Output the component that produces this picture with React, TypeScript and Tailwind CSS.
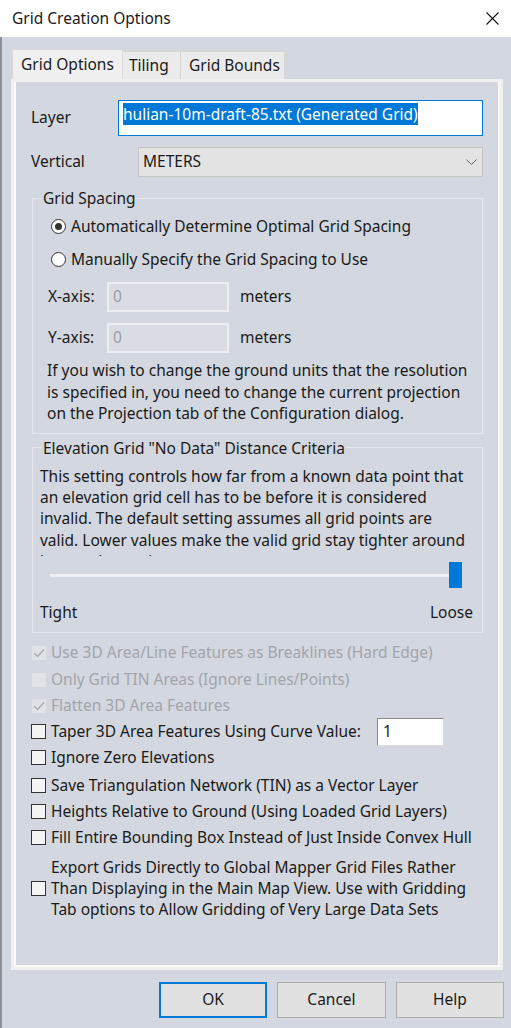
import React from "react";

function Radio({ checked }: { checked?: boolean }) {
  return (
    <span className="w-[15px] h-[15px] rounded-full border border-[#333] bg-white flex items-center justify-center shrink-0">
      {checked && <span className="w-[7px] h-[7px] rounded-full bg-[#333]" />}
    </span>
  );
}

function CheckBox({ checked, disabled }: { checked?: boolean; disabled?: boolean }) {
  if (disabled) {
    return (
      <span className="w-[14px] h-[14px] ml-[1px] bg-[#dfe2e7] flex items-center justify-center shrink-0">
        {checked && (
          <svg width="12" height="10" viewBox="0 0 12 10">
            <polyline points="1,5 4.5,8.5 11,1.5" fill="none" stroke="#a9abb0" strokeWidth="1.4" />
          </svg>
        )}
      </span>
    );
  }
  return <span className="w-[15px] h-[15px] border border-[#333] bg-[#f4f4f4] shrink-0" />;
}

function CheckRow({
  label,
  checked,
  disabled,
  className = "",
  children,
}: {
  label: string;
  checked?: boolean;
  disabled?: boolean;
  className?: string;
  children?: React.ReactNode;
}) {
  return (
    <div className={`h-[26px] flex items-center gap-[5px] ${className}`}>
      <CheckBox checked={checked} disabled={disabled} />
      <span className={`whitespace-nowrap ${disabled ? "text-[#a2a5ab]" : ""}`}>{label}</span>
      {children}
    </div>
  );
}

function AxisRow({ label, className = "" }: { label: string; className?: string }) {
  return (
    <div className={`h-[30px] flex items-center pl-[15px] ${className}`}>
      <span className="w-[59px]">{label}</span>
      <div className="w-[122px] h-[30px] border-2 border-[#eceef1] bg-[#d9dce2] flex items-center pl-[4px] text-[#9a9da3]">
        0
      </div>
      <span className="ml-[11px]">meters</span>
    </div>
  );
}

export default function App() {
  const spacingNote = [
    "If you wish to change the ground units that the resolution",
    "is specified in, you need to change the current projection",
    "on the Projection tab of the Configuration dialog.",
  ];
  const elevationNote = [
    "This setting controls how far from a known data point that",
    "an elevation grid cell has to be before it is considered",
    "invalid. The default setting assumes all grid points are",
    "valid. Lower values make the valid grid stay tighter around",
    "known data points.",
  ];

  return (
    <div className="w-[511px] h-[1028px] bg-[#d3d7df] font-['Noto_Sans',sans-serif] text-[15.5px] text-[#1a1a1a] flex flex-col overflow-hidden">
      {/* Title bar */}
      <div className="h-[37px] bg-white flex items-center justify-between pl-[12px] pr-[12px] shrink-0">
        <span>Grid Creation Options</span>
        <svg width="13" height="13" viewBox="0 0 13 13">
          <line x1="0.5" y1="0.5" x2="12.5" y2="12.5" stroke="#111" strokeWidth="1.1" />
          <line x1="12.5" y1="0.5" x2="0.5" y2="12.5" stroke="#111" strokeWidth="1.1" />
        </svg>
      </div>

      <div className="flex-1 flex flex-col border-l-2 border-[#8c8f94]">
        {/* Tabs */}
        <div className="ml-[10px] mt-[12px] h-[30px] flex items-end">
          <div className="w-[111px] h-[30px] bg-[#f0f0f0] border border-b-0 border-[#dadada] flex items-center pl-[8px]">
            Grid Options
          </div>
          <div className="w-[58px] h-[28px] bg-[#ebebeb] border border-b-0 border-l-0 border-[#d6d6d6] flex items-center pl-[6px]">
            Tiling
          </div>
          <div className="w-[104px] h-[28px] bg-[#ebebeb] border border-b-0 border-l-0 border-[#d6d6d6] flex items-center pl-[8px]">
            Grid Bounds
          </div>
        </div>

        {/* Tab panel */}
        <div className="ml-[9px] w-[492px] h-[891px] bg-[#f0f0f0] px-[3px] pt-[3px] pb-[3px]">
          <div className="h-full bg-[#d3d7df] border-2 border-t-0 border-[#fafafa] pl-[15px] pr-[15px] flex flex-col">
            {/* Layer */}
            <div className="mt-[18px] h-[36px] flex">
              <span className="w-[87px] flex items-center">Layer</span>
              <div className="flex-1 bg-white border border-[#0078d7] pt-[2px] pl-[4px]">
                <span className="bg-[#0078d7] text-white leading-[22px] inline-block whitespace-nowrap">
                  hulian-10m-draft-85.txt (Generated Grid)
                </span>
              </div>
            </div>

            {/* Vertical */}
            <div className="mt-[11px] h-[30px] flex items-center">
              <span className="w-[107px]">Vertical</span>
              <div className="flex-1 h-[30px] bg-[#e3e3e3] border border-[#c4c4c4] flex items-center justify-between pl-[4px] pr-[5px]">
                <span>METERS</span>
                <svg width="11" height="7" viewBox="0 0 11 7">
                  <polyline points="0.5,0.5 5.5,5.5 10.5,0.5" fill="none" stroke="#666" strokeWidth="1" />
                </svg>
              </div>
            </div>

            {/* Grid Spacing */}
            <fieldset className="mt-[11px] ml-[1px] border border-[#e4e6eb] pb-[8px]">
              <legend className="ml-[9px] leading-[20px] px-[1px]">Grid Spacing</legend>
              <div className="mt-[2px] pl-[18px]">
                <div className="h-[33px] flex items-center gap-[5px]">
                  <Radio checked />
                  <span>Automatically Determine Optimal Grid Spacing</span>
                </div>
                <div className="h-[33px] flex items-center gap-[5px]">
                  <Radio />
                  <span>Manually Specify the Grid Spacing to Use</span>
                </div>
              </div>
              <AxisRow label="X-axis:" className="mt-[6px]" />
              <AxisRow label="Y-axis:" className="mt-[11px]" />
              <div className="mt-[7px] pl-[14px] leading-[21.5px]">
                {spacingNote.map((line) => (
                  <div key={line} className="whitespace-nowrap">
                    {line}
                  </div>
                ))}
              </div>
            </fieldset>

            {/* Elevation criteria */}
            <fieldset className="mt-[4px] ml-[1px] border border-[#e4e6eb] pb-[9px]">
              <legend className="ml-[9px] leading-[20px] px-[1px]">Elevation Grid "No Data" Distance Criteria</legend>
              <div className="mt-[8px] h-[90px] overflow-hidden pl-[7px] leading-[21.4px]">
                {elevationNote.map((line) => (
                  <div key={line} className="whitespace-nowrap">
                    {line}
                  </div>
                ))}
              </div>
              <div className="mt-[6px] ml-[17px] w-[412px] h-[26px] relative">
                <div className="absolute left-0 right-0 top-[12px] h-[3px] bg-[#eceef1]" />
                <div className="absolute right-0 top-0 w-[13px] h-[26px] bg-[#0078d7]" />
              </div>
              <div className="mt-[15px] h-[20px] flex items-center justify-between pl-[7px] pr-[9px]">
                <span>Tight</span>
                <span>Loose</span>
              </div>
            </fieldset>

            {/* Options */}
            <div className="mt-[7px] flex flex-col">
              <CheckRow label="Use 3D Area/Line Features as Breaklines (Hard Edge)" checked disabled />
              <CheckRow label="Only Grid TIN Areas (Ignore Lines/Points)" disabled className="mt-[1px]" />
              <CheckRow label="Flatten 3D Area Features" checked disabled />
              <CheckRow label="Taper 3D Area Features Using Curve Value:">
                <div className="ml-[11px] w-[67px] h-[28px] bg-white border-l border-t border-[#8a8a8a] border-r border-b border-r-[#dcdcdc] border-b-[#dcdcdc] flex items-center pl-[5px]">
                  1
                </div>
              </CheckRow>
              <CheckRow label="Ignore Zero Elevations" />
              <CheckRow label="Save Triangulation Network (TIN) as a Vector Layer" className="mt-[2px]" />
              <CheckRow label="Heights Relative to Ground (Using Loaded Grid Layers)" />
              <CheckRow label="Fill Entire Bounding Box Instead of Just Inside Convex Hull" />
              <div className="mt-[6px] flex items-center gap-[5px]">
                <CheckBox />
                <div className="leading-[21px]">
                  <div className="whitespace-nowrap">Export Grids Directly to Global Mapper Grid Files Rather</div>
                  <div className="whitespace-nowrap">Than Displaying in the Main Map View. Use with Gridding</div>
                  <div className="whitespace-nowrap">Tab options to Allow Gridding of Very Large Data Sets</div>
                </div>
              </div>
            </div>
          </div>
        </div>

        {/* Buttons */}
        <div className="mt-[12px] flex justify-end gap-[10px] pr-[7px]">
          <button className="w-[108px] h-[36px] bg-[#e1e1e1] border-2 border-[#0078d7]">OK</button>
          <button className="w-[109px] h-[36px] bg-[#e1e1e1] border border-[#adadad]">Cancel</button>
          <button className="w-[108px] h-[36px] bg-[#e1e1e1] border border-[#adadad]">Help</button>
        </div>
      </div>
    </div>
  );
}
